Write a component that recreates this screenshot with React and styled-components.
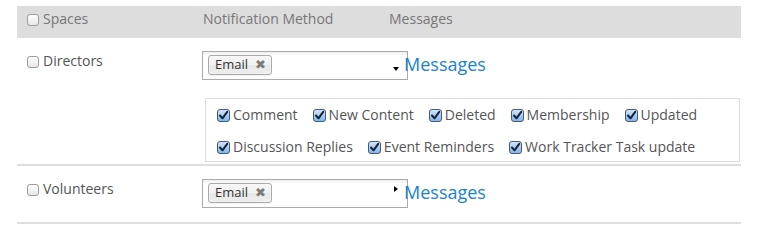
import React from 'react';
import styled, { createGlobalStyle } from 'styled-components';

const GlobalStyle = createGlobalStyle`
  body {
    margin: 0;
    background: #fff;
    font-family: "Open Sans", "Noto Sans", sans-serif;
    font-size: 14px;
    color: #555;
  }
`;

const spaces = [
  {
    id: 'directors',
    name: 'Directors',
    open: true,
    messages: [
      ['Comment', 'New Content', 'Deleted', 'Membership', 'Updated'],
      ['Discussion Replies', 'Event Reminders', 'Work Tracker Task update'],
    ],
  },
  { id: 'volunteers', name: 'Volunteers', open: false },
];

const Box = ({ checked }) =>
  checked ? (
    <CheckSvg width="13" height="13" viewBox="0 0 13 13">
      <defs>
        <linearGradient id="cbBlue" x1="0" y1="0" x2="0" y2="1">
          <stop offset="0" stopColor="#d6e8fb" />
          <stop offset="1" stopColor="#7fb3ea" />
        </linearGradient>
      </defs>
      <rect x="0.5" y="0.5" width="12" height="12" rx="2.5" fill="url(#cbBlue)" stroke="#4a5a74" />
      <path d="M3 6.5 L5.5 9.3 L10.2 2.8" fill="none" stroke="#14203d" strokeWidth="2" strokeLinecap="round" strokeLinejoin="round" />
    </CheckSvg>
  ) : (
    <CheckSvg width="12" height="12" viewBox="0 0 12 12">
      <defs>
        <linearGradient id="cbGray" x1="0" y1="0" x2="0" y2="1">
          <stop offset="0" stopColor="#ffffff" />
          <stop offset="1" stopColor="#e6e6e6" />
        </linearGradient>
      </defs>
      <rect x="0.5" y="0.5" width="11" height="11" rx="2.5" fill="url(#cbGray)" stroke="#9c9c9c" />
    </CheckSvg>
  );

const App = () => (
  <Page>
    <GlobalStyle />
    <HeaderRow>
      <HeadCell $w={176}>
        <Box />
        Spaces
      </HeadCell>
      <HeadCell $w={186}>Notification Method</HeadCell>
      <HeadCell>Messages</HeadCell>
    </HeaderRow>

    {spaces.map((space) => (
      <SpaceRow key={space.id} $open={space.open}>
        <SpaceName>
          <Box />
          {space.name}
        </SpaceName>
        <Settings>
          <MethodLine>
            <Chosen>
              <Tag>
                Email<TagClose>✖</TagClose>
              </Tag>
            </Chosen>
            <Toggle href="#">
              <Caret $open={space.open} />
              Messages
            </Toggle>
          </MethodLine>
          {space.open && (
            <MessagePanel>
              {space.messages.map((line, i) => (
                <MessageLine key={i}>
                  {line.map((m) => (
                    <MessageItem key={m}>
                      <Box checked />
                      {m}
                    </MessageItem>
                  ))}
                </MessageLine>
              ))}
            </MessagePanel>
          )}
        </Settings>
      </SpaceRow>
    ))}
  </Page>
);

export default App;

const Page = styled.div`
  width: 724px;
  padding: 6px 0 0 17px;
`;

const CheckSvg = styled.svg`
  flex: none;
  display: block;
  margin-top: 5px;
  margin-right: 4px;
`;

const HeaderRow = styled.div`
  display: flex;
  height: 32px;
  padding: 3px 0 0 10px;
  box-sizing: border-box;
  background: #dddddd;
  color: #777;
  line-height: 20px;
`;

const HeadCell = styled.div`
  display: flex;
  align-items: flex-start;
  width: ${(p) => (p.$w ? `${p.$w}px` : 'auto')};
  white-space: pre;
`;

const SpaceRow = styled.div`
  display: flex;
  padding: 12px 0 ${(p) => (p.$open ? '2px' : '14px')} 10px;
  border-bottom: 2px solid #dedede;
`;

const SpaceName = styled.div`
  display: flex;
  align-items: flex-start;
  width: 175px;
  padding-top: 1px;
  line-height: 20px;
  white-space: pre;
  color: #555;
`;

const Settings = styled.div`
  display: flex;
  flex-direction: column;
`;

const MethodLine = styled.div`
  display: flex;
  align-items: flex-start;
`;

const Chosen = styled.div`
  width: 206px;
  height: 29px;
  margin-top: 1px;
  box-sizing: border-box;
  border: 1px solid #aaa;
  background: linear-gradient(#eee 1%, #fff 15%);
  padding: 2px 0 0 5px;
`;

const Tag = styled.span`
  display: inline-flex;
  align-items: center;
  height: 20px;
  box-sizing: border-box;
  padding: 0 5px 0 6px;
  border: 1px solid #aaa;
  border-radius: 3px;
  background: linear-gradient(#f4f4f4 20%, #f0f0f0 50%, #e8e8e8 52%, #eee 100%);
  box-shadow: 0 0 2px #fff inset, 0 1px 0 rgba(0, 0, 0, 0.05);
  color: #333;
  font-size: 13px;
  line-height: 13px;
`;

const TagClose = styled.span`
  margin-left: 7px;
  font-size: 13px;
  color: #7a7a7a;
`;

const Toggle = styled.a`
  display: flex;
  align-items: flex-start;
  margin: 2px 0 0 -15px;
  color: #1a82d0;
  font-size: 18px;
  line-height: 24px;
  text-decoration: none;
`;

const Caret = styled.span`
  display: block;
  width: 0;
  height: 0;
  border-style: solid;
  border-color: transparent;
  ${(p) =>
    p.$open
      ? `
    margin: 15px 5px 0 0;
    border-width: 4px 3px 0 3px;
    border-top-color: #000;
  `
      : `
    margin: 6px 6px 0 1px;
    border-width: 3.5px 0 3.5px 4px;
    border-left-color: #000;
  `}
`;

const MessagePanel = styled.div`
  display: flex;
  flex-direction: column;
  gap: 2px;
  width: 535px;
  box-sizing: border-box;
  margin: 18px 0 0 3px;
  padding: 0 0 0 11px;
  border: 1px solid #dcdcdc;
`;

const MessageLine = styled.div`
  display: flex;
  height: 30px;
  align-items: center;
`;

const MessageItem = styled.label`
  display: flex;
  align-items: center;
  margin-right: 15px;
  white-space: pre;
  color: #555;

  svg {
    margin-top: 2px;
    margin-right: 3px;
  }
`;
